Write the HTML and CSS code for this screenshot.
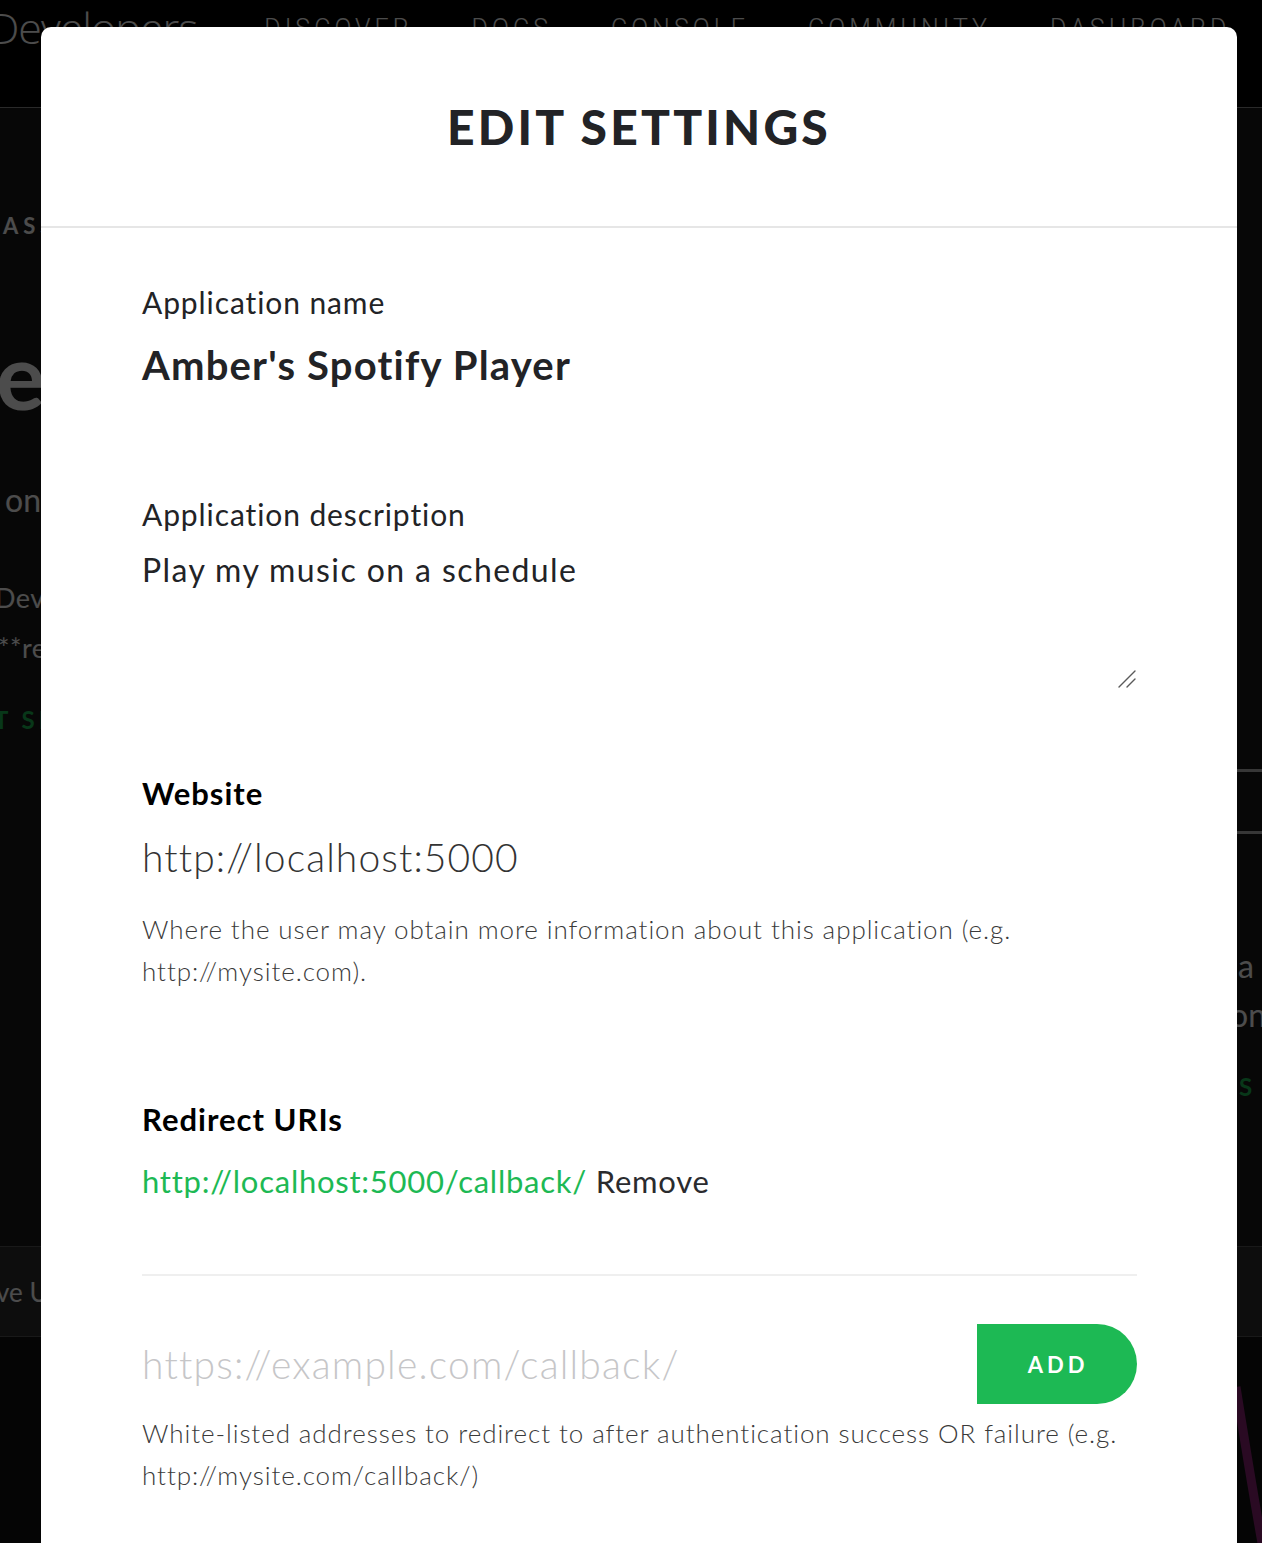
FILE: index.html
```html
<!DOCTYPE html>
<html lang="en">
<head>
<meta charset="utf-8">
<title>Edit settings</title>
<link rel="stylesheet" href="styles.css">
</head>
<body>
<div class="page" aria-hidden="true">
  <header class="topnav">
    <span class="brand">Developers</span>
    <nav class="navlinks">
      <span>DISCOVER</span>
      <span>DOCS</span>
      <span>CONSOLE</span>
      <span>COMMUNITY</span>
      <span>DASHBOARD</span>
    </nav>
  </header>
  <main class="dash">
    <div class="dash-cols">
      <div class="col-left">
        <p class="bg-crumb">ASSETS</p>
        <p class="bg-title">er's Spotify Player</p>
        <p class="bg-sub">on a schedule</p>
        <p class="bg-text bg-deve">Developer Terms of Service</p>
        <p class="bg-text bg-star">**redirect URI**</p>
        <p class="bg-green">T SETTINGS</p>
      </div>
      <div class="col-right">
        <div class="bg-tabs"></div>
        <p class="bg-sub bg-a">a</p>
        <p class="bg-sub bg-on">on</p>
        <p class="bg-green bg-s">S</p>
      </div>
    </div>
    <div class="bg-band"><span>ve Users</span></div>
    <svg class="bg-chart" viewBox="0 0 1262 210" preserveAspectRatio="none">
      <path d="M1236 50 C1244 100 1252 150 1262 206" fill="none" stroke="#8c2477" stroke-width="9"/>
    </svg>
  </main>
</div>

<div class="overlay">
  <section class="modal" role="dialog" aria-labelledby="modal-title">
    <header class="modal-head">
      <h1 id="modal-title" class="modal-title">EDIT SETTINGS</h1>
    </header>
    <div class="modal-body">
      <div class="field field-name">
        <p class="label">Application name</p>
        <p class="value-name">Amber's Spotify Player</p>
      </div>
      <div class="field field-desc">
        <p class="label">Application description</p>
        <div class="desc-wrap">
          <textarea class="desc-input">Play my music on a schedule</textarea>
          <svg class="resize-grip" width="18" height="18" viewBox="0 0 18 18" aria-hidden="true">
            <path d="M1 17 L17 1 M9 17 L17 9" stroke="#5a5a5a" stroke-width="1.4" stroke-linecap="round" fill="none"/>
          </svg>
        </div>
      </div>
      <div class="field field-site">
        <p class="heading">Website</p>
        <p class="site-value">http://localhost:5000</p>
        <p class="help">Where the user may obtain more information about this application (e.g. http://mysite.com).</p>
      </div>
      <div class="field field-redirect">
        <p class="heading">Redirect URIs</p>
        <p class="uri-row"><span class="uri">http://localhost:5000/callback/</span> <span class="remove">Remove</span></p>
        <hr class="divider">
        <div class="add-row">
          <input class="uri-input" type="text" placeholder="https://example.com/callback/">
          <button class="add-btn" type="button">ADD</button>
        </div>
        <p class="help help-redirect">White-listed addresses to redirect to after authentication success OR failure (e.g. http://mysite.com/callback/)</p>
      </div>
    </div>
  </section>
</div>
</body>
</html>
```

FILE: styles.css
```css
* { box-sizing: border-box; }

html, body {
  margin: 0;
  padding: 0;
}

body {
  width: 1262px;
  height: 1543px;
  overflow: hidden;
  background: #1a1a1a;
  font-family: Lato, "Noto Sans", sans-serif;
}

p { margin: 0; }

/* ---------- background page ---------- */
.page {
  width: 1262px;
  color: #fff;
}

.topnav {
  height: 108px;
  background: #000;
  border-bottom: 1px solid #8c8c8c;
  display: flex;
  align-items: flex-start;
  gap: 67px;
  white-space: nowrap;
}

.brand {
  font-family: "Open Sans", sans-serif;
  font-weight: 300;
  font-size: 43px;
  line-height: 56px;
  margin-left: -11px;
  letter-spacing: -1px;
}

.navlinks {
  display: flex;
  gap: 59px;
  padding-top: 14px;
  font-family: Roboto, sans-serif;
  font-weight: 300;
  font-size: 25px;
  line-height: 30px;
  letter-spacing: 4px;
}

.dash-cols {
  display: flex;
  justify-content: space-between;
  height: 994px;
}

.col-left {
  width: 400px;
  white-space: nowrap;
}

.col-right {
  width: 32px;
  flex-shrink: 0;
  white-space: nowrap;
}

.bg-crumb {
  margin-top: 103px;
  margin-left: 3px;
  font-weight: 700;
  font-size: 22px;
  line-height: 30px;
  letter-spacing: 5px;
}

.bg-title {
  margin-top: 84px;
  margin-left: -4px;
  font-weight: 700;
  font-size: 92px;
  line-height: 100px;
}

.bg-sub {
  margin-top: 55px;
  margin-left: 5px;
  font-weight: 400;
  font-size: 32px;
  line-height: 40px;
}

.bg-text {
  font-size: 27px;
  line-height: 30px;
  letter-spacing: 0.5px;
}

.bg-deve { margin-top: 63px; margin-left: -5px; }
.bg-star { margin-top: 20px; margin-left: -2px; }

.bg-green {
  margin-top: 42px;
  margin-left: -6px;
  color: #1db954;
  font-weight: 700;
  font-size: 24px;
  line-height: 30px;
  letter-spacing: 4px;
}

.bg-tabs {
  margin-top: 661px;
  height: 65px;
  width: 60px;
  border-top: 3px solid #b8b8b8;
  border-bottom: 3px solid #b8b8b8;
}

.bg-a { margin-top: 112px; margin-left: 8px; }
.bg-on { margin-top: 9px; margin-left: 0; }
.bg-s { margin-top: 37px; margin-left: 9px; }

.bg-band {
  margin-top: 144px;
  height: 91px;
  border-top: 1px solid #555;
  border-bottom: 1px solid #555;
  background: #2e2e2e;
  display: flex;
  align-items: center;
  font-size: 26px;
  white-space: nowrap;
}

.bg-band span { margin-left: -4px; }

.bg-chart {
  display: block;
  width: 1262px;
  height: 210px;
  background: #121212;
}

/* ---------- overlay + modal ---------- */
.overlay {
  position: fixed;
  inset: 0;
  background: rgba(0, 0, 0, 0.7);
  padding: 27px 25px 0 41px;
  overflow: hidden;
}

.modal {
  background: #fff;
  border-radius: 10px 10px 0 0;
  min-height: 1600px;
  color: #222326;
}

.modal-head {
  height: 201px;
  border-bottom: 2px solid #e6e6e6;
  display: flex;
  align-items: center;
  justify-content: center;
}

.modal-title {
  margin: 0;
  font-family: Lato, sans-serif;
  font-weight: 900;
  font-size: 48px;
  line-height: 60px;
  letter-spacing: 3.2px;
  color: #222326;
}

.modal-body {
  padding: 54px 100px 0 101px;
}

.label {
  font-weight: 400;
  font-size: 30px;
  line-height: 40px;
  letter-spacing: 0.9px;
  color: #222326;
}

.value-name {
  margin-top: 18px;
  font-weight: 700;
  font-size: 40px;
  line-height: 50px;
  letter-spacing: 1.2px;
  color: #222326;
}

.field-desc { margin-top: 104px; }

.desc-wrap {
  position: relative;
  margin-top: 14px;
}

.desc-input {
  display: block;
  width: 100%;
  height: 142px;
  padding: 0;
  border: none;
  outline: none;
  resize: none;
  font-family: Lato, sans-serif;
  font-size: 32px;
  line-height: 44px;
  letter-spacing: 1.4px;
  color: #222326;
  background: transparent;
}

.resize-grip {
  position: absolute;
  right: 1px;
  bottom: 2px;
}

.field-site { margin-top: 83px; }

.heading {
  font-family: Lato, sans-serif;
  font-weight: 700;
  font-size: 31px;
  line-height: 40px;
  letter-spacing: 1px;
  color: #000;
}

.site-value {
  margin-top: 19px;
  font-family: Lato, sans-serif;
  font-weight: 300;
  font-size: 39px;
  line-height: 50px;
  letter-spacing: 1.1px;
  color: #333;
}

.help {
  margin-top: 26px;
  font-family: Lato, sans-serif;
  font-weight: 300;
  font-size: 26px;
  line-height: 42px;
  letter-spacing: 0.92px;
  color: #3a3a3a;
}

.field-redirect { margin-top: 107px; }

.uri-row {
  margin-top: 20px;
  font-size: 31px;
  line-height: 44px;
  letter-spacing: 0.75px;
}

.uri { color: #1db954; }
.remove { color: #2a2b2e; }

.divider {
  margin: 71px 0 0;
  height: 2px;
  border: none;
  background: #efefef;
}

.add-row {
  margin-top: 48px;
  display: flex;
  align-items: center;
  height: 80px;
}

.uri-input {
  flex: 1;
  min-width: 0;
  height: 80px;
  border: none;
  outline: none;
  padding: 0;
  font-family: Lato, sans-serif;
  font-weight: 300;
  font-size: 39px;
  letter-spacing: 1.2px;
  color: #333;
  background: transparent;
}

.uri-input::placeholder { color: #c6c6c8; }

.add-btn {
  width: 160px;
  height: 80px;
  border: none;
  border-radius: 0 40px 40px 0;
  background: #1db954;
  color: #fff;
  font-family: Lato, sans-serif;
  font-weight: 700;
  font-size: 22px;
  letter-spacing: 4px;
  padding: 0 0 0 2px;
}

.help-redirect { margin-top: 8px; }
```
